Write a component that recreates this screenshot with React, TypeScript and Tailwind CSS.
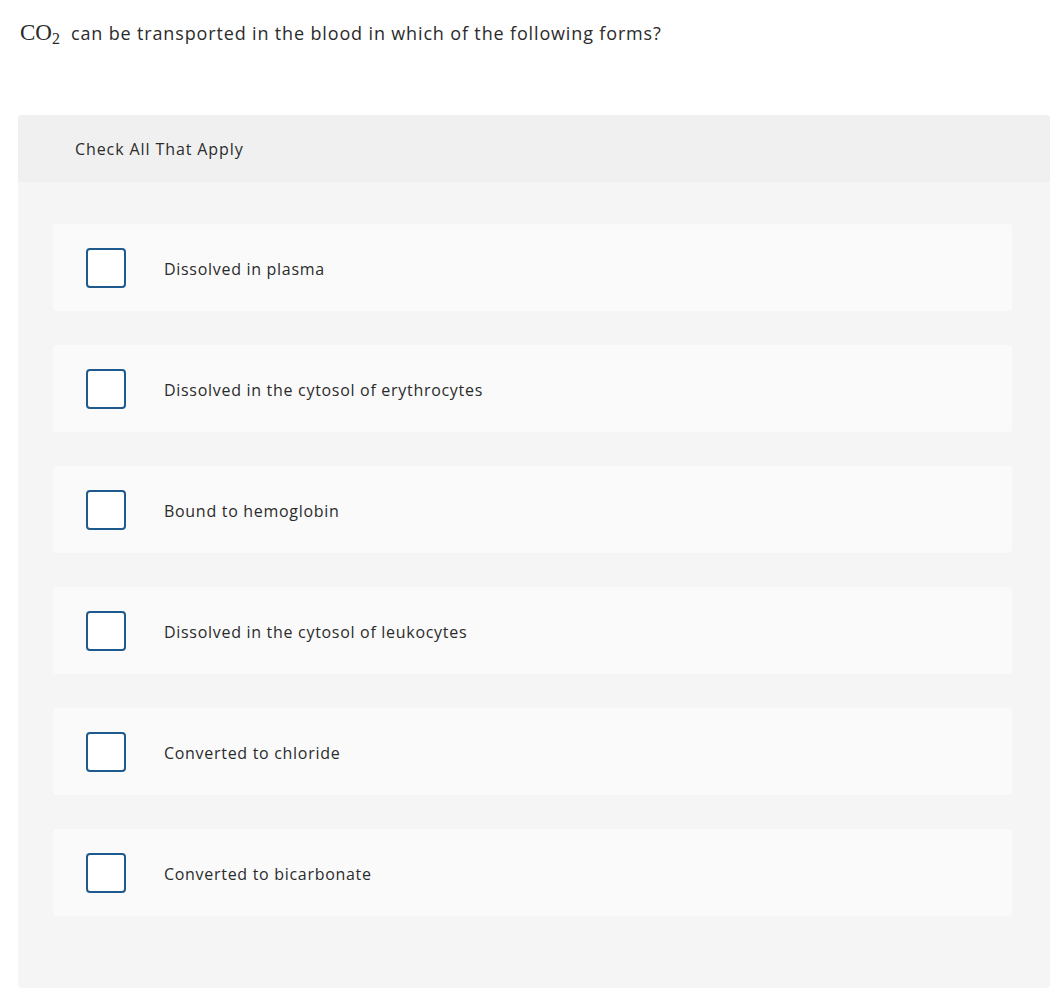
import { useState } from "react";

const OPTIONS = [
  "Dissolved in plasma",
  "Dissolved in the cytosol of erythrocytes",
  "Bound to hemoglobin",
  "Dissolved in the cytosol of leukocytes",
  "Converted to chloride",
  "Converted to bicarbonate",
];

export default function App() {
  const [checked, setChecked] = useState<boolean[]>(OPTIONS.map(() => false));

  function toggle(i: number) {
    setChecked((prev) => prev.map((v, j) => (j === i ? !v : v)));
  }

  return (
    <div className="w-[1056px] h-[992px] bg-white font-['Open_Sans',sans-serif] text-[#2b2b2b]">
      <div className="pl-[20px] pt-[19px] h-[115px] text-[18px] leading-[28px] tracking-[0.85px]">
        <span className="font-['Liberation_Serif',serif] text-[23px] tracking-normal mr-[11px]">
          CO<sub className="text-[16px]">2</sub>
        </span>
        can be transported in the blood in which of the following forms?
      </div>

      <div className="ml-[18px] w-[1032px] h-[873px] rounded-[4px] bg-[#f5f5f5] overflow-hidden">
        <div className="h-[67px] bg-[#f0f0f0] pl-[57px] flex items-center text-[16px] tracking-[0.9px]">
          Check All That Apply
        </div>

        <div className="pl-[35px] pt-[42px] flex flex-col gap-[34px]">
          {OPTIONS.map((label, i) => (
            <label
              key={label}
              className="w-[959px] h-[87px] rounded-[4px] bg-[#fafafa] flex items-center cursor-pointer"
            >
              <input
                type="checkbox"
                className="sr-only"
                checked={checked[i]}
                onChange={() => toggle(i)}
              />
              <span className="ml-[33px] w-[40px] h-[40px] rounded-[4px] border-[2.5px] border-[#1f5a8f] bg-white flex items-center justify-center">
                {checked[i] && (
                  <svg width="24" height="24" viewBox="0 0 24 24" fill="none" stroke="#1f5a8f" strokeWidth="3" strokeLinecap="round" strokeLinejoin="round">
                    <path d="M5 12l5 5L19 7" />
                  </svg>
                )}
              </span>
              <span className="ml-[38px] pt-[2px] text-[16px] tracking-[0.7px]">{label}</span>
            </label>
          ))}
        </div>
      </div>
    </div>
  );
}
